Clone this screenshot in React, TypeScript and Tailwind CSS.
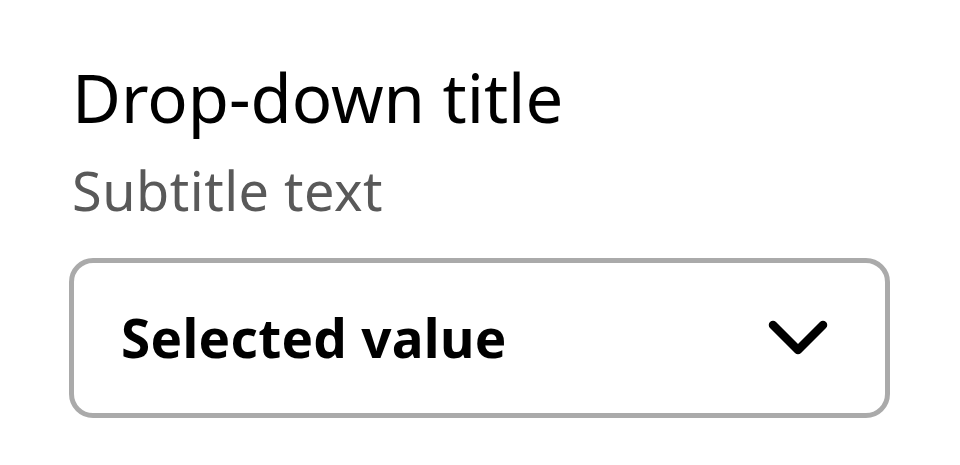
import React from "react";

export default function App() {
  return (
    <div
      className="min-h-screen bg-white pl-[72px] pt-[57px]"
      style={{ fontFamily: '"Noto Sans", "Open Sans", sans-serif' }}
    >
      <h1 className="text-[67px] leading-[80px] font-normal text-black">Drop-down title</h1>
      <p className="mt-[21px] text-[54px] leading-[64px] tracking-[0.5px] text-[#595959]">Subtitle text</p>
      <button
        type="button"
        className="-ml-[3px] mt-[36px] flex h-[160px] w-[821px] items-center justify-between rounded-[24px] border-[5px] border-[#aaaaaa] bg-white pl-[47px] pr-[57px] text-left"
      >
        <span className="text-[53px] font-bold leading-[64px] tracking-[0.3px] text-black">Selected value</span>
        <svg width="60" height="36" viewBox="0 0 60 36" fill="none" aria-hidden="true">
          <path
            d="M5 5 L30 30 L55 5"
            stroke="black"
            strokeWidth="8.5"
            strokeLinecap="round"
            strokeLinejoin="round"
          />
        </svg>
      </button>
    </div>
  );
}
